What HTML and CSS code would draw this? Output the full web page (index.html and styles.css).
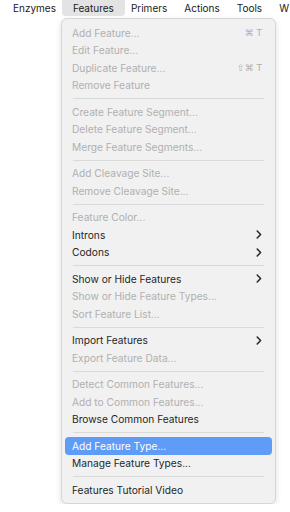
FILE: index.html
```html
<!doctype html>
<html lang="en">
<head>
    <title>Features menu</title>
    <meta charset="utf-8" name="viewport" content="width=device-width,initial-scale=1">
    <link rel="stylesheet" href="styles.css">
</head>
<body>
    <div class="menubar">
        <div class="bar_item">Enzymes</div>
        <div class="bar_item open">Features</div>
        <div class="bar_item">Primers</div>
        <div class="bar_item">Actions</div>
        <div class="bar_item">Tools</div>
        <div class="bar_item">W</div>
    </div>
    <div class="menu">
        <div class="row off"><span>Add Feature...</span><span class="key">⌘ T</span></div>
        <div class="row off"><span>Edit Feature...</span></div>
        <div class="row off"><span>Duplicate Feature...</span><span class="key">⇧⌘ T</span></div>
        <div class="row off"><span>Remove Feature</span></div>
        <div class="sep"></div>
        <div class="row off"><span>Create Feature Segment...</span></div>
        <div class="row off"><span>Delete Feature Segment...</span></div>
        <div class="row off"><span>Merge Feature Segments...</span></div>
        <div class="sep"></div>
        <div class="row off"><span>Add Cleavage Site...</span></div>
        <div class="row off"><span>Remove Cleavage Site...</span></div>
        <div class="sep"></div>
        <div class="row off"><span>Feature Color...</span></div>
        <div class="row"><span>Introns</span><svg class="arrow" width="6" height="9" viewBox="0 0 6 9"><path d="M1.2 1 L4.6 4.5 L1.2 8" fill="none" stroke="#262626" stroke-width="1.5" stroke-linecap="round" stroke-linejoin="round"/></svg></div>
        <div class="row"><span>Codons</span><svg class="arrow" width="6" height="9" viewBox="0 0 6 9"><path d="M1.2 1 L4.6 4.5 L1.2 8" fill="none" stroke="#262626" stroke-width="1.5" stroke-linecap="round" stroke-linejoin="round"/></svg></div>
        <div class="sep"></div>
        <div class="row"><span>Show or Hide Features</span><svg class="arrow" width="6" height="9" viewBox="0 0 6 9"><path d="M1.2 1 L4.6 4.5 L1.2 8" fill="none" stroke="#262626" stroke-width="1.5" stroke-linecap="round" stroke-linejoin="round"/></svg></div>
        <div class="row off"><span>Show or Hide Feature Types...</span></div>
        <div class="row off"><span>Sort Feature List...</span></div>
        <div class="sep"></div>
        <div class="row"><span>Import Features</span><svg class="arrow" width="6" height="9" viewBox="0 0 6 9"><path d="M1.2 1 L4.6 4.5 L1.2 8" fill="none" stroke="#262626" stroke-width="1.5" stroke-linecap="round" stroke-linejoin="round"/></svg></div>
        <div class="row off"><span>Export Feature Data...</span></div>
        <div class="sep"></div>
        <div class="row off"><span>Detect Common Features...</span></div>
        <div class="row off"><span>Add to Common Features...</span></div>
        <div class="row"><span>Browse Common Features</span></div>
        <div class="sep"></div>
        <div class="row selected"><span>Add Feature Type...</span></div>
        <div class="row"><span>Manage Feature Types...</span></div>
        <div class="sep"></div>
        <div class="row"><span>Features Tutorial Video</span></div>
    </div>
</body>
</html>
```
FILE: styles.css
```css
body{
    margin: 0;
    background-color: #ffffff;
    font-family: Inter, "Noto Sans", sans-serif;
    font-size: 10.2px;
    color: #262626;
    user-select: none;
}
.menubar{
    display: flex;
    flex-direction: row;
    align-items: center;
    gap: 17px;
    height: 16px;
    padding-left: 13px;
    font-size: 10px;
    color: #1a1a1a;
    white-space: nowrap;
}
.bar_item{
    line-height: 16px;
}
.open{
    padding: 0 11px;
    margin: 0 -11px;
    background-color: #e3e3e3;
    border-radius: 0 0 4px 4px;
}
.menu{
    width: 213px;
    margin-left: 61px;
    margin-top: 2px;
    padding: 5px 0 4px 0;
    background-color: #f1f1f1;
    border: 1px solid #d6d6d6;
    border-radius: 6px;
    box-shadow: 0 2px 6px rgba(0, 0, 0, 0.12);
}
.row{
    display: flex;
    flex-direction: row;
    justify-content: space-between;
    align-items: center;
    height: 17.5px;
    margin: 0 3px;
    padding: 0 10px 0 7px;
    border-radius: 4px;
}
.off{
    color: #b0b0b0;
}
.key{
    font-family: "DejaVu Sans", sans-serif;
    font-size: 9px;
}
.arrow{
    display: block;
}
.selected{
    background-color: #5e9cf8;
    color: #ffffff;
}
.sep{
    height: 1px;
    margin: 4px 11px 4px 11px;
    background-color: #dadada;
}
```
